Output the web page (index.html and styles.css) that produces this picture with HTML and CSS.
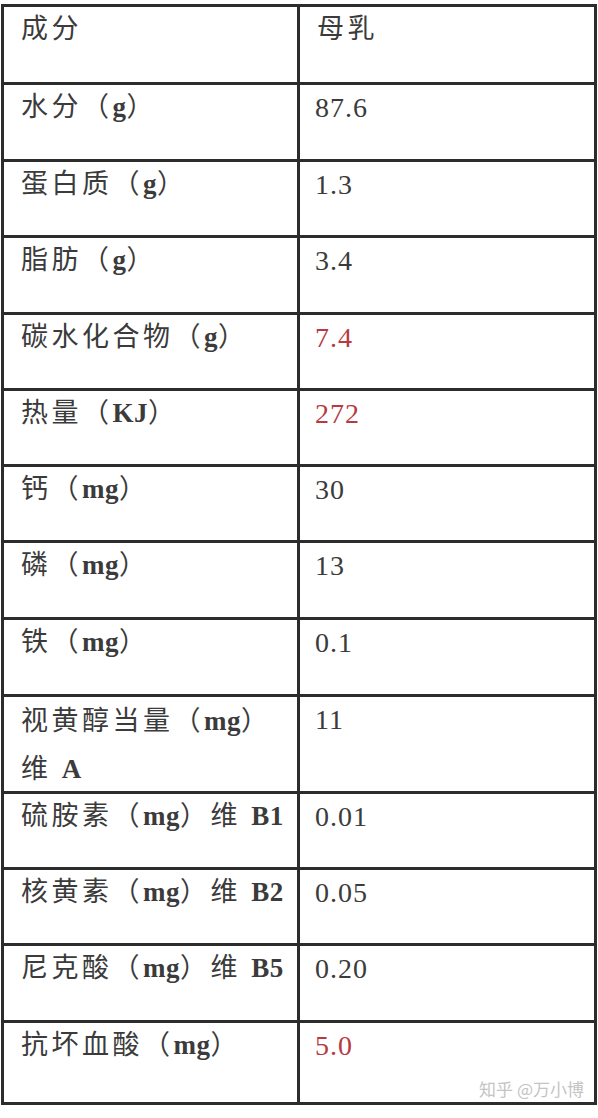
FILE: index.html
```html
<!DOCTYPE html>
<html lang="zh-CN">
<head>
<meta charset="utf-8">
<title>母乳成分</title>
<link rel="stylesheet" href="styles.css">
</head>
<body>
<div class="sheet">
  <div class="cell label">成分</div>
  <div class="cell value cjk">母乳</div>

  <div class="cell label">水分（<span class="lt">g</span>）</div>
  <div class="cell value">87.6</div>

  <div class="cell label">蛋白质（<span class="lt">g</span>）</div>
  <div class="cell value">1.3</div>

  <div class="cell label">脂肪（<span class="lt">g</span>）</div>
  <div class="cell value">3.4</div>

  <div class="cell label">碳水化合物（<span class="lt">g</span>）</div>
  <div class="cell value red">7.4</div>

  <div class="cell label">热量（<span class="lt">KJ</span>）</div>
  <div class="cell value red">272</div>

  <div class="cell label">钙（<span class="lt">mg</span>）</div>
  <div class="cell value">30</div>

  <div class="cell label">磷（<span class="lt">mg</span>）</div>
  <div class="cell value">13</div>

  <div class="cell label">铁（<span class="lt">mg</span>）</div>
  <div class="cell value">0.1</div>

  <div class="cell label two">视黄醇当量（<span class="lt">mg</span>）<br>维 <span class="lt">A</span></div>
  <div class="cell value">11</div>

  <div class="cell label">硫胺素（<span class="lt">mg</span>）维 <span class="lt">B1</span></div>
  <div class="cell value">0.01</div>

  <div class="cell label">核黄素（<span class="lt">mg</span>）维 <span class="lt">B2</span></div>
  <div class="cell value">0.05</div>

  <div class="cell label">尼克酸（<span class="lt">mg</span>）维 <span class="lt">B5</span></div>
  <div class="cell value">0.20</div>

  <div class="cell label">抗坏血酸（<span class="lt">mg</span>）</div>
  <div class="cell value red last">5.0<span class="mark">知乎 @万小博</span></div>
</div>
</body>
</html>
```

FILE: styles.css
```css
html, body {
  margin: 0;
  padding: 0;
  background: #ffffff;
}

.sheet {
  display: grid;
  grid-template-columns: 296px 297px;
  grid-template-rows: 78px 77px 76px 77px 76px 76px 76px 77px 77px 97px 76px 76px 77px 82px;
  margin: 4px 0 0 1px;
  width: 593px;
  border-top: 3px solid #2c2c2c;
  border-left: 3px solid #2c2c2c;
  color: #3b3b3b;
  font-family: "Liberation Serif", "Noto Sans CJK SC", serif;
}

.cell {
  box-sizing: border-box;
  border-right: 3px solid #2c2c2c;
  border-bottom: 3px solid #2c2c2c;
  white-space: nowrap;
}

.label {
  padding-left: 17px;
  font-size: 27px;
  line-height: 45px;
  letter-spacing: 3.5px;
}

.label.two {
  line-height: 48px;
}

.lt {
  font-weight: bold;
  font-size: 27px;
  letter-spacing: 0.5px;
}

.value {
  padding-left: 15px;
  font-size: 28px;
  line-height: 45px;
  letter-spacing: 1px;
}

.value.cjk {
  font-size: 27px;
  letter-spacing: 3.5px;
  padding-left: 17px;
}

.red {
  color: #b73a42;
}

.last {
  position: relative;
}

.mark {
  position: absolute;
  right: 10px;
  bottom: 2px;
  font-family: "Noto Sans CJK SC", "Noto Sans", sans-serif;
  font-size: 17px;
  line-height: 22px;
  letter-spacing: 0;
  color: #c4c4c4;
}
```
